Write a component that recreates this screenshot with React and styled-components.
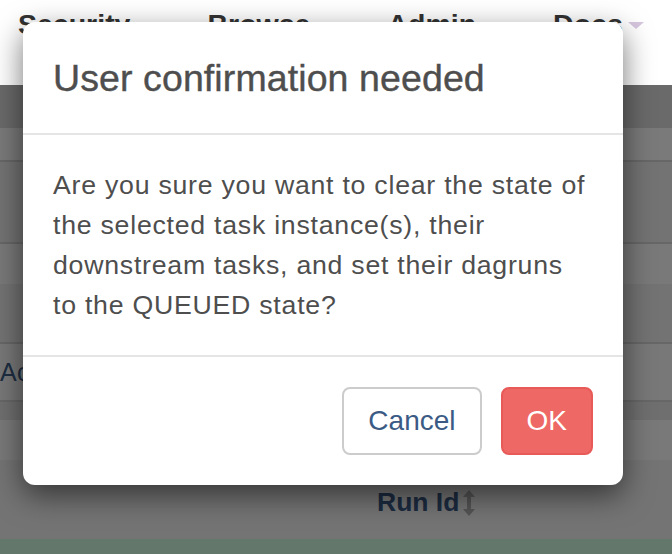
import React from 'react'
import styled, { createGlobalStyle } from 'styled-components'

const GlobalStyle = createGlobalStyle`
  html, body {
    margin: 0;
    padding: 0;
    background: #fff;
  }
  body {
    font-family: "Liberation Sans", Arial, Helvetica, sans-serif;
    color: #51504f;
  }
`

const Page = styled.div`
  position: relative;
  width: 672px;
  height: 554px;
  overflow: hidden;
  background: #fff;
`

const Navbar = styled.nav`
  position: relative;
  z-index: 3;
  height: 85px;
  background: #fff;
`

const NavList = styled.ul`
  display: flex;
  gap: 56px;
  margin: 0;
  padding: 9px 0 0 18px;
  list-style: none;
`

const NavItem = styled.li`
  display: flex;
  align-items: flex-start;
  gap: 5px;
  font-size: 28.5px;
  font-weight: bold;
  line-height: 30px;
  color: #333;
`

const Caret = styled.span`
  width: 0;
  height: 0;
  margin-top: 13px;
  border-left: 8px solid transparent;
  border-right: 8px solid transparent;
  border-top: 7px solid #d6c6df;
`

const Content = styled.div`
  display: flex;
  flex-direction: column;
`

const Row = styled.div`
  box-sizing: border-box;
  display: flex;
  align-items: center;
  height: ${p => p.$h}px;
  background: ${p => p.$bg};
  border-top: ${p => (p.$line ? '2px solid #cfcfcf' : 'none')};
`

const ActionText = styled.span`
  padding-left: 0;
  font-size: 25px;
  letter-spacing: 0.4px;
  color: #3a5a82;
`

const ColumnHead = styled.div`
  display: flex;
  align-items: center;
  gap: 3px;
  margin-left: 377px;
  margin-top: 6px;
  font-size: 26.5px;
  font-weight: bold;
  color: #385680;
`

const Backdrop = styled.div`
  position: absolute;
  left: 0;
  right: 0;
  top: 85px;
  bottom: 0;
  z-index: 2;
  background: rgba(0, 0, 0, 0.5);
`

const Modal = styled.div`
  position: absolute;
  z-index: 4;
  top: 22px;
  left: 23px;
  width: 600px;
  box-sizing: border-box;
  background: #fff;
  border-radius: 12px;
  box-shadow: 0 10px 30px rgba(0, 0, 0, 0.55);
  color: #4e4e4e;
`

const ModalHeader = styled.div`
  padding: 36px 30px 35px;
  border-bottom: 2px solid #e5e5e5;

  h4 {
    margin: 0;
    font-size: 37.5px;
    font-weight: normal;
    line-height: 40px;
    letter-spacing: 0.1px;
    -webkit-text-stroke: 0.4px #4e4e4e;
  }
`

const ModalBody = styled.div`
  padding: 30px 36px 30px 30px;
  font-size: 26.7px;
  letter-spacing: 0.75px;
  line-height: 40px;
`

const ModalFooter = styled.div`
  display: flex;
  justify-content: flex-end;
  gap: 19px;
  padding: 30px;
  border-top: 2px solid #e5e5e5;
`

const Button = styled.button`
  font-family: inherit;
  font-size: 28px;
  line-height: 40px;
  padding: 12px 24px;
  border-radius: 8px;
  border: 2px solid ${p => (p.$danger ? '#e85a57' : '#cccccc')};
  background: ${p => (p.$danger ? '#ee6865' : '#fff')};
  color: ${p => (p.$danger ? '#fff' : '#3b5b85')};
  cursor: pointer;
`

const SortIcon = () => (
  <svg width="14" height="26" viewBox="0 0 14 26" fill="#a9a9a9">
    <path d="M7 0 L13 7 L9 7 L9 19 L13 19 L7 26 L1 19 L5 19 L5 7 L1 7 Z" />
  </svg>
)

const rows = [
  { h: 43, bg: '#d4d4d4' },
  { h: 32, bg: '#f5f5f5' },
  { h: 82, bg: '#e6e6e6', line: true },
  { h: 42, bg: '#f3f3f3', line: true },
  { h: 58, bg: '#e6e6e6' },
  { h: 58, bg: '#f0f0f0', line: true, actions: true },
  { h: 20, bg: '#dedede', line: true },
  { h: 40, bg: '#f2f2f2' },
  { h: 79, bg: '#e8e8e8', head: true },
  { h: 20, bg: '#c6f0d4' },
]

export default function App() {
  return (
    <>
      <GlobalStyle />
      <Page>
        <Navbar>
          <NavList>
            {['Security', 'Browse', 'Admin', 'Docs'].map(name => (
              <NavItem key={name}>
                {name}
                <Caret />
              </NavItem>
            ))}
          </NavList>
        </Navbar>

        <Content>
          {rows.map((r, i) => (
            <Row key={i} $h={r.h} $bg={r.bg} $line={r.line}>
              {r.actions && <ActionText>Actions</ActionText>}
              {r.head && (
                <ColumnHead>
                  Run Id
                  <SortIcon />
                </ColumnHead>
              )}
            </Row>
          ))}
        </Content>

        <Backdrop />

        <Modal role="dialog">
          <ModalHeader>
            <h4>User confirmation needed</h4>
          </ModalHeader>
          <ModalBody>
            Are you sure you want to clear the state of the selected task
            instance(s), their downstream tasks, and set their dagruns to the
            QUEUED state?
          </ModalBody>
          <ModalFooter>
            <Button>Cancel</Button>
            <Button $danger>OK</Button>
          </ModalFooter>
        </Modal>
      </Page>
    </>
  )
}
